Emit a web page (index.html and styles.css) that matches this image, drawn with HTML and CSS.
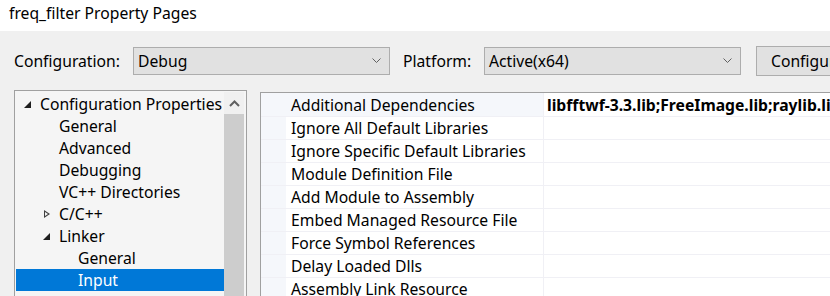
FILE: index.html
```html
<!DOCTYPE html>
<html lang="en">
<head>
    <meta charset="UTF-8">
    <title>freq_filter Property Pages</title>
    <link rel="stylesheet" href="styles.css">
</head>
<body>
    <div class="titlebar">freq_filter Property Pages</div>
    <div class="dialog">
        <div class="toolbar">
            <span class="label label-config">Configuration:</span>
            <div class="combo">
                <span>Debug</span>
                <svg class="chev" width="9" height="5" viewBox="0 0 9 5"><path d="M0.5 0.5 L4.5 4.5 L8.5 0.5" fill="none" stroke="#606060" stroke-width="1"/></svg>
            </div>
            <span class="label label-platform">Platform:</span>
            <div class="combo">
                <span>Active(x64)</span>
                <svg class="chev" width="9" height="5" viewBox="0 0 9 5"><path d="M0.5 0.5 L4.5 4.5 L8.5 0.5" fill="none" stroke="#606060" stroke-width="1"/></svg>
            </div>
            <div class="button">Configuration Manager...</div>
        </div>

        <div class="main">
            <div class="tree">
                <ul class="tree-list">
                    <li class="node lvl0"><span class="arrow open"></span>Configuration Properties</li>
                    <li class="node lvl1">General</li>
                    <li class="node lvl1">Advanced</li>
                    <li class="node lvl1">Debugging</li>
                    <li class="node lvl1">VC++ Directories</li>
                    <li class="node lvl1"><span class="arrow closed"></span>C/C++</li>
                    <li class="node lvl1"><span class="arrow open"></span>Linker</li>
                    <li class="node lvl2">General</li>
                    <li class="node lvl2 selected">Input</li>
                </ul>
                <div class="scrollbar">
                    <div class="scroll-up">
                        <svg width="11" height="7" viewBox="0 0 11 7"><path d="M1 6 L5.5 1.5 L10 6" fill="none" stroke="#606060" stroke-width="2"/></svg>
                    </div>
                    <div class="scroll-thumb"></div>
                </div>
            </div>

            <div class="grid">
                <div class="row current"><div class="gutter"></div><div class="name">Additional Dependencies</div><div class="value">libfftwf-3.3.lib;FreeImage.lib;raylib.lib;opengl32.lib;gdi32.lib;winmm.lib;%(AdditionalDependencies)</div></div>
                <div class="row"><div class="gutter"></div><div class="name">Ignore All Default Libraries</div><div class="value"></div></div>
                <div class="row"><div class="gutter"></div><div class="name">Ignore Specific Default Libraries</div><div class="value"></div></div>
                <div class="row"><div class="gutter"></div><div class="name">Module Definition File</div><div class="value"></div></div>
                <div class="row"><div class="gutter"></div><div class="name">Add Module to Assembly</div><div class="value"></div></div>
                <div class="row"><div class="gutter"></div><div class="name">Embed Managed Resource File</div><div class="value"></div></div>
                <div class="row"><div class="gutter"></div><div class="name">Force Symbol References</div><div class="value"></div></div>
                <div class="row"><div class="gutter"></div><div class="name">Delay Loaded Dlls</div><div class="value"></div></div>
                <div class="row"><div class="gutter"></div><div class="name">Assembly Link Resource</div><div class="value"></div></div>
            </div>
        </div>
    </div>
</body>
</html>
```

FILE: styles.css
```css
* {
    margin: 0;
    padding: 0;
    box-sizing: border-box;
}
body {
    width: 830px;
    height: 296px;
    overflow: hidden;
    font-family: 'Noto Sans', 'Open Sans', sans-serif;
    font-size: 15.7px;
    color: #000;
    background-color: #f0f0f0;
}
.titlebar {
    height: 31px;
    line-height: 26px;
    padding-left: 9px;
    background-color: #fff;
    white-space: nowrap;
}
.dialog {
    background-color: #f0f0f0;
}
.toolbar {
    display: flex;
    align-items: center;
    height: 59px;
    padding-left: 14px;
    white-space: nowrap;
    overflow: hidden;
}
.label {
    flex: none;
}
.label-config {
    width: 119px;
}
.label-platform {
    width: 81px;
    margin-left: 13px;
}
.combo {
    flex: none;
    display: flex;
    align-items: center;
    justify-content: space-between;
    width: 257px;
    height: 28px;
    padding: 0 8px 0 4px;
    border: 1px solid #adadad;
    background-color: #e1e1e1;
}
.chev {
    display: block;
}
.button {
    flex: none;
    height: 30px;
    line-height: 28px;
    margin-left: 15px;
    padding: 0 14px;
    border: 1px solid #adadad;
    background-color: #e1e1e1;
    white-space: nowrap;
}
.main {
    display: flex;
    align-items: flex-start;
    padding-left: 14px;
    height: 206px;
    overflow: hidden;
}
.tree {
    display: flex;
    flex: none;
    width: 233px;
    height: 206px;
    border: 1px solid #a0a0a0;
    border-bottom: none;
    background-color: #f5f5f5;
    padding: 1px 1px 0 1px;
}
.tree-list {
    list-style: none;
    flex: 1;
    padding-top: 1px;
}
.node {
    height: 22px;
    line-height: 22px;
    white-space: nowrap;
    position: relative;
}
.lvl0 {
    padding-left: 24px;
}
.lvl1 {
    padding-left: 43px;
}
.lvl2 {
    padding-left: 62px;
}
.selected {
    background-color: #0078d7;
    color: #fff;
}
.arrow {
    position: absolute;
    top: 8px;
    width: 0;
    height: 0;
}
.lvl0 .arrow {
    left: 8px;
}
.lvl1 .arrow {
    left: 27px;
}
.arrow.open {
    border-left: 7px solid transparent;
    border-bottom: 7px solid #1e1e1e;
}
.arrow.closed {
    top: 7px;
    left: 28px;
    width: 6px;
    height: 9px;
}
.arrow.closed::before {
    content: '';
    position: absolute;
    left: 0;
    top: 0;
    border-top: 4.5px solid transparent;
    border-bottom: 4.5px solid transparent;
    border-left: 6px solid #404040;
}
.arrow.closed::after {
    content: '';
    position: absolute;
    left: 1px;
    top: 2px;
    border-top: 2.5px solid transparent;
    border-bottom: 2.5px solid transparent;
    border-left: 3px solid #f5f5f5;
}
.scrollbar {
    width: 20px;
    margin-right: 1px;
    background-color: #f0f0f0;
    display: flex;
    flex-direction: column;
}
.scroll-up {
    height: 22px;
    display: flex;
    align-items: center;
    justify-content: center;
}
.scroll-thumb {
    flex: 1;
    background-color: #cdcdcd;
}
.grid {
    flex: 1;
    margin-left: 13px;
    margin-top: 2px;
    height: 204px;
    border-top: 1px solid #a0a0a0;
    border-left: 1px solid #a0a0a0;
    background-color: #fff;
    overflow: hidden;
}
.row {
    display: flex;
    height: 23px;
    border-bottom: 1px solid #f0f0f5;
    white-space: nowrap;
}
.row.current {
    height: 24px;
    background-color: #f5f7fb;
}
.gutter {
    width: 25px;
    flex: none;
    background-color: #f5f7fb;
}
.name {
    width: 258px;
    flex: none;
    padding-left: 5px;
    line-height: 22px;
    border-right: 1px solid #f0f0f5;
}
.row.current .name {
    line-height: 24px;
}
.value {
    flex: 1;
    padding-left: 3px;
    line-height: 24px;
    font-weight: bold;
    overflow: hidden;
    background-color: #fff;
}
```
